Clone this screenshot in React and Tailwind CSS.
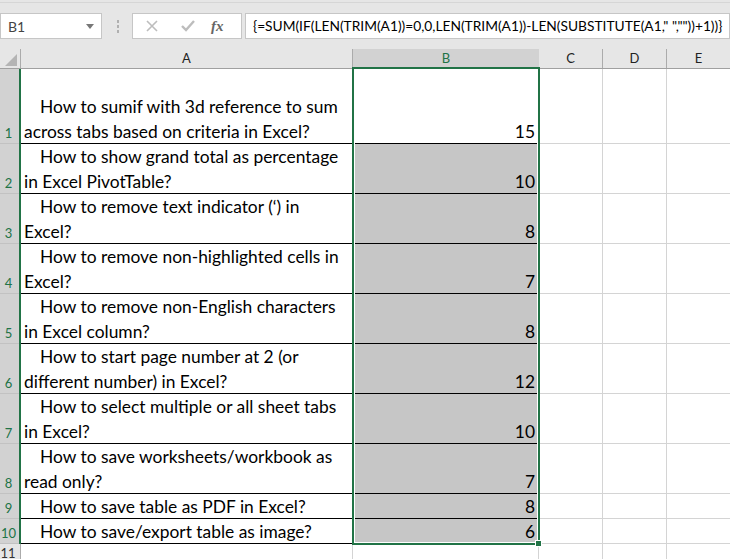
const rows = [
  { h: 'h-[75px]', l: ['How to sumif with 3d reference to sum', 'across tabs based on criteria in Excel?'], v: 15, white: true },
  { h: 'h-[50px]', l: ['How to show grand total as percentage', 'in Excel PivotTable?'], v: 10 },
  { h: 'h-[50px]', l: ['How to remove text indicator (‘) in', 'Excel?'], v: 8 },
  { h: 'h-[50px]', l: ['How to remove non-highlighted cells in', 'Excel?'], v: 7 },
  { h: 'h-[50px]', l: ['How to remove non-English characters', 'in Excel column?'], v: 8 },
  { h: 'h-[50px]', l: ['How to start page number at 2 (or', 'different number) in Excel?'], v: 12 },
  { h: 'h-[50px]', l: ['How to select multiple or all sheet tabs', 'in Excel?'], v: 10 },
  { h: 'h-[50px]', l: ['How to save worksheets/workbook as', 'read only?'], v: 7 },
  { h: 'h-[25px]', l: ['How to save table as PDF in Excel?'], v: 8 },
  { h: 'h-[25px]', l: ['How to save/export table as image?'], v: 6 },
];

const Blank = () => (
  <>
    <div className="w-[64px] h-full border-r border-b border-[#d4d4d4]" />
    <div className="w-[64px] h-full border-r border-b border-[#d4d4d4]" />
    <div className="flex-1 h-full border-b border-[#d4d4d4]" />
  </>
);

export default function App() {
  return (
    <div className="relative w-[730px] h-[559px] overflow-hidden bg-white font-['Lato','Liberation_Sans',sans-serif] text-black">
      {/* formula bar */}
      <div className="h-[49px] bg-[#e6e6e6] pt-[2px]">
        <div className="h-px bg-[#d6d6d6]" />
        <div className="flex items-start mt-[10px]">
          <div className="w-[102px] h-[26px] bg-white border border-[#c6c6c6] flex items-center justify-between pl-[7px] pr-[6px]">
            <span className="text-[14px] text-[#444]">B1</span>
            <svg width="8" height="5" viewBox="0 0 8 5" className="mr-[1px]"><path d="M0 0h8L4 5z" fill="#777" /></svg>
          </div>
          <div className="w-[30px] h-[26px] flex flex-col items-center justify-center gap-[2px] pl-[1px]">
            <div className="w-[2px] h-[3px] bg-[#b0b0b0]" />
            <div className="w-[2px] h-[3px] bg-[#b0b0b0]" />
            <div className="w-[2px] h-[3px] bg-[#b0b0b0]" />
          </div>
          <div className="w-[110px] h-[26px] bg-white border border-[#c6c6c6] flex items-center pl-[13px]">
            <svg width="12" height="12" viewBox="0 0 12 12"><path d="M1 1l10 10M11 1L1 11" stroke="#bdbdbd" strokeWidth="1.6" fill="none" /></svg>
            <svg width="14" height="12" viewBox="0 0 14 12" className="ml-[23px]"><path d="M1 6l4 4 8-9" stroke="#bdbdbd" strokeWidth="2.4" fill="none" /></svg>
            <span className="ml-[16px] font-['Liberation_Serif',serif] italic font-bold text-[15px] text-[#666]">fx</span>
          </div>
          <div className="ml-[3px] flex-1 h-[26px] bg-white border border-[#c6c6c6] flex items-center pl-[7px] text-[13.75px] whitespace-nowrap">
            {'{=SUM(IF(LEN(TRIM(A1))=0,0,LEN(TRIM(A1))-LEN(SUBSTITUTE(A1," ",""))+1))}'}
          </div>
        </div>
      </div>

      {/* column headers */}
      <div className="flex h-[20px] bg-[#e6e6e6] border-b border-[#a0a0a0] text-[13px] text-[#222]">
        <div className="w-[21px] border-r border-[#ababab] flex items-end pb-[2px] pl-[5px]">
          <svg width="12" height="12" viewBox="0 0 12 12"><path d="M12 0v12H0z" fill="#b4b4b4" /></svg>
        </div>
        <div className="w-[332px] flex items-center justify-center border-r border-[#ababab]">A</div>
        <div className="w-[186px] flex items-center justify-center bg-[#d2d2d2] text-[#217346]">B</div>
        <div className="w-[64px] flex items-center justify-center border-r border-[#ababab]">C</div>
        <div className="w-[64px] flex items-center justify-center border-r border-[#ababab]">D</div>
        <div className="flex-1 flex items-center justify-center">E</div>
      </div>

      {/* rows */}
      {rows.map((r, i) => (
        <div key={i} className={`flex ${r.h}`}>
          <div className="w-[21px] h-full bg-[#d2d2d2] border-b border-[#c2c2c2] flex items-end justify-center pr-[4px] text-[13px] text-[#217346]">{i + 1}</div>
          <div className="w-[332px] h-full border-b border-black flex flex-col justify-end pl-[3px] text-[17.4px] leading-[25px] whitespace-nowrap">
            {r.l.map((t, j) => (
              <div key={j} className={j === r.l.length - 1 ? (j === 0 ? 'pl-[16px] -mb-px' : '-mb-px') : 'pl-[16px]'}>{t}</div>
            ))}
          </div>
          <div className={`w-[186px] h-full border-b border-l border-black flex items-end justify-end pr-[4px] text-[17.4px] ${r.white ? 'bg-white' : 'bg-[#c6c6c6]'}`}>
            <span className="leading-[25px] -mb-px">{r.v}</span>
          </div>
          <Blank />
        </div>
      ))}
      <div className="flex h-[16px]">
        <div className="w-[21px] h-full bg-[#e6e6e6] border-r border-[#ababab] flex justify-center pr-[4px] text-[13px] text-[#333]">11</div>
        <div className="w-[332px] h-full border-r border-[#d4d4d4]" />
        <div className="w-[186px] h-full border-r border-[#d4d4d4]" />
        <div className="w-[64px] h-full border-r border-[#d4d4d4]" />
        <div className="w-[64px] h-full border-r border-[#d4d4d4]" />
      </div>

      {/* selection overlay */}
      <div className="absolute left-[19px] top-[69px] w-[2px] h-[475px] bg-[#217346]" />
      <div className="absolute left-[352px] top-[67px] w-[188px] h-[478px] border-2 border-[#217346]">
        <div className="w-full h-full border border-white" />
      </div>
      <div className="absolute left-[535px] top-[540px] w-[7px] h-[7px] bg-[#217346] border border-white" />
    </div>
  );
}
